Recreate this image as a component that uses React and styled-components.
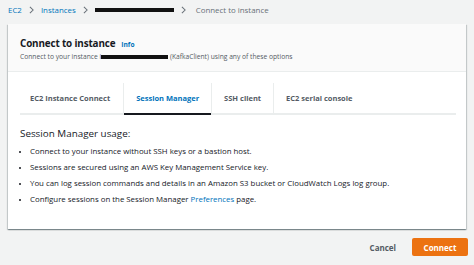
import styled, { createGlobalStyle } from "styled-components";

const GlobalStyle = createGlobalStyle`
  body {
    margin: 0;
    background: #f2f3f3;
    font-family: "Open Sans", "Noto Sans", sans-serif;
    color: #16191f;
  }
`;

const tabs = ["EC2 Instance Connect", "Session Manager", "SSH client", "EC2 serial console"];

function App() {
  return (
    <Page>
      <GlobalStyle />
      <Crumbs>
        <CrumbLink>EC2</CrumbLink>
        <Chevron />
        <CrumbLink>Instances</CrumbLink>
        <Chevron />
        <Redacted $w={79} $h={4} />
        <Chevron />
        <CrumbCurrent>Connect to instance</CrumbCurrent>
      </Crumbs>

      <Card>
        <CardHeader>
          <TitleRow>
            <Title>Connect to instance</Title>
            <InfoLink>Info</InfoLink>
          </TitleRow>
          <Subtitle>
            Connect to your instance i<Redacted $w={67} $h={4} /> (KafkaClient) using any of these options
          </Subtitle>
        </CardHeader>

        <CardBody>
          <TabList>
            {tabs.map((t, i) => (
              <Tab key={t} $active={i === 1} $first={i === 0}>
                {t}
              </Tab>
            ))}
          </TabList>

          <Usage>
            <UsageTitle>Session Manager usage:</UsageTitle>
            <Bullets>
              <li>Connect to your instance without SSH keys or a bastion host.</li>
              <li>Sessions are secured using an AWS Key Management Service key.</li>
              <li>You can log session commands and details in an Amazon S3 bucket or CloudWatch Logs log group.</li>
              <li>
                Configure sessions on the Session Manager <TextLink>Preferences</TextLink> page.
              </li>
            </Bullets>
          </Usage>
        </CardBody>
      </Card>

      <Footer>
        <CancelButton>Cancel</CancelButton>
        <PrimaryButton>Connect</PrimaryButton>
      </Footer>
    </Page>
  );
}

function Chevron() {
  return (
    <svg viewBox="0 0 6 10" width="5" height="8">
      <path d="M1 1l4 4-4 4" fill="none" stroke="#687078" strokeWidth="1.3" />
    </svg>
  );
}

const Page = styled.div`
  width: 474px;
  height: 265px;
  padding: 0 8px;
  box-sizing: border-box;
  display: flex;
  flex-direction: column;
`;

const Crumbs = styled.nav`
  height: 24px;
  display: flex;
  align-items: center;
  gap: 7px;
  font-size: 7.9px;
  padding-bottom: 5px;
  box-sizing: border-box;
`;

const CrumbLink = styled.span`
  color: #0073bb;
`;

const CrumbCurrent = styled.span`
  color: #687078;
  margin-left: 3px;
`;

const Redacted = styled.span`
  display: inline-block;
  width: ${(p) => p.$w}px;
  height: ${(p) => p.$h}px;
  background: #111;
  vertical-align: middle;
`;

const Card = styled.section`
  background: #fff;
  box-shadow: 0 1px 1px 0 rgba(0, 28, 36, 0.3), 1px 1px 1px 0 rgba(0, 28, 36, 0.15),
    -1px 1px 1px 0 rgba(0, 28, 36, 0.15);
  height: 205px;
`;

const CardHeader = styled.header`
  background: #fafafa;
  border-bottom: 1px solid #eaeded;
  height: 48px;
  box-sizing: border-box;
  padding: 12px 12px 0;
`;

const TitleRow = styled.div`
  display: flex;
  align-items: baseline;
  gap: 6px;
`;

const Title = styled.h1`
  margin: 0;
  font-size: 9.9px;
  letter-spacing: -0.15px;
  font-weight: 700;
  line-height: 14px;
`;

const InfoLink = styled.span`
  font-size: 6.6px;
  font-weight: 700;
  color: #0073bb;
`;

const Subtitle = styled.p`
  margin: 1px 0 0;
  font-size: 6.7px;
  line-height: 12px;
  color: #545b64;
`;

const CardBody = styled.div`
  padding: 11px 10px 0 12px;
`;

const TabList = styled.div`
  display: flex;
  align-items: center;
  height: 30px;
  border-bottom: 2px solid #eaeded;
`;

const Tab = styled.div`
  position: relative;
  height: 100%;
  display: flex;
  align-items: center;
  padding: ${(p) => (p.$first ? "0 13px 0 10px" : "0 12px")};
  font-size: 7.5px;
  font-weight: 700;
  color: ${(p) => (p.$active ? "#0073bb" : "#545b64")};
  border-left: ${(p) => (p.$first ? "none" : "1px solid #eaeded")};
  &::after {
    content: "";
    position: absolute;
    left: 0;
    right: 0;
    bottom: -2px;
    height: 2px;
    background: ${(p) => (p.$active ? "#16191f" : "transparent")};
  }
`;

const Usage = styled.div`
  padding-top: 11px;
`;

const UsageTitle = styled.h2`
  margin: 0;
  font-size: 9.85px;
  font-weight: 400;
  line-height: 15px;
`;

const Bullets = styled.ul`
  margin: 2px 0 0;
  padding: 0 0 0 10px;
  font-size: 7.85px;
  line-height: 16px;
  li::marker {
    font-size: 7px;
  }
`;

const TextLink = styled.span`
  color: #0073bb;
`;

const Footer = styled.div`
  flex: 1;
  display: flex;
  justify-content: flex-end;
  align-items: center;
  gap: 16px;
`;

const CancelButton = styled.span`
  font-size: 8px;
  font-weight: 700;
  color: #545b64;
`;

const PrimaryButton = styled.button`
  width: 56px;
  height: 18px;
  margin-right: -2px;
  border: none;
  border-radius: 2px;
  background: #ec7211;
  color: #fff;
  font-family: inherit;
  font-size: 8px;
  font-weight: 700;
  padding: 0;
`;

export default App;
